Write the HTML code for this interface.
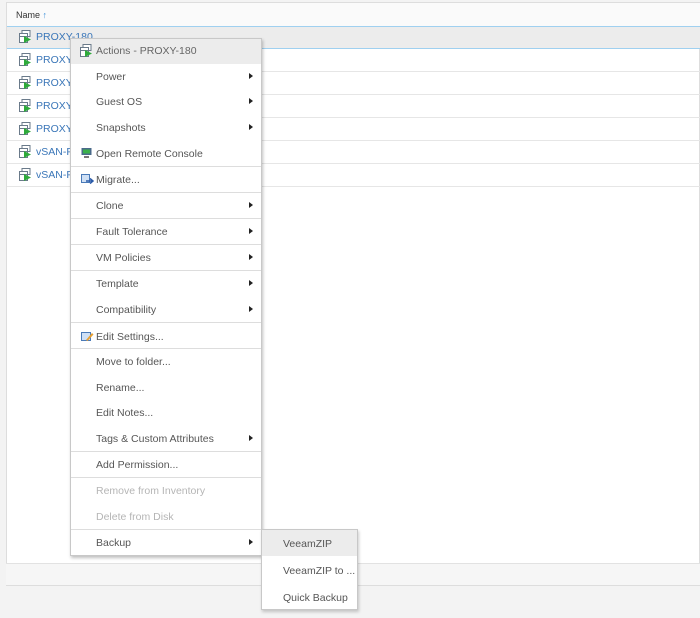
<!DOCTYPE html><html><head><style>
body{margin:0;width:700px;height:618px;background:#f3f3f3;font-family:"Liberation Sans",sans-serif;position:relative;overflow:hidden}
.a{position:absolute}
.panel{left:6px;top:2px;width:694px;height:584px;background:#fff;border:1px solid #ddd;box-sizing:border-box}
.hd{left:7px;top:3px;width:693px;height:23px;background:#fafafa;border-bottom:1px solid #e2e2e2;font-size:9px;color:#333}
.row{left:7px;width:693px;height:23px;border-bottom:1px solid #e6e6e6;box-sizing:border-box;font-size:10.5px;color:#3a76b8}
.row span{position:absolute;left:29px;top:5px}
.vm{position:absolute;left:12px;top:4px;width:13px;height:13px}
.menu{left:70px;top:38px;width:192px;height:518px;background:#fff;border:1px solid #c8c8c8;box-shadow:1px 2px 3px rgba(0,0,0,.25);box-sizing:border-box}
.it{position:absolute;left:25px;font-size:10.5px;color:#565656;line-height:12px}
.dis{color:#b5b5b5}
.ar{position:absolute;left:178px;width:0;height:0;border-left:4px solid #222;border-top:3px solid transparent;border-bottom:3px solid transparent;margin-top:-1px}
.sep{position:absolute;left:0;width:190px;height:1px;background:#ddd}
.sub{left:261px;top:529px;width:97px;height:81px;background:#fff;border:1px solid #c8c8c8;box-shadow:1px 2px 3px rgba(0,0,0,.2);box-sizing:border-box}
</style></head><body>
<div class="a panel"></div>
<div class="a hd"><span class="a" style="left:9px;top:7px">Name <span style="color:#3a8fd8">&#8593;</span></span></div>
<div class="a" style="left:7px;top:26px;width:693px;height:23px;background:#ececec;border-top:1px solid #9fd0f0;border-bottom:1px solid #9fd0f0;box-sizing:border-box"></div>
<div class="a" style="left:6px;top:563px;width:694px;height:23px;background:#f6f6f6;border-top:1px solid #e2e2e2;border-bottom:1px solid #ddd;box-sizing:border-box"></div>

<svg width="0" height="0" style="position:absolute"><defs><g id="v"><rect x="3" y="0.5" width="8" height="6" fill="#fff" stroke="#6a7a8a"/><rect x="0.5" y="3.5" width="8" height="9" fill="#fff" stroke="#6a7a8a"/><line x1="0.5" y1="6.5" x2="8.5" y2="6.5" stroke="#6a7a8a"/><path d="M5 6 L12 9.5 L5 13 Z" fill="#2eaa3a"/></g></defs></svg>

<div class="a row" style="top:26px;border:none"><svg class="vm"><use href="#v"/></svg><span>PROXY-180</span></div>
<div class="a row" style="top:49px"><svg class="vm"><use href="#v"/></svg><span>PROXY-1</span></div>
<div class="a row" style="top:72px"><svg class="vm"><use href="#v"/></svg><span>PROXY-1</span></div>
<div class="a row" style="top:95px"><svg class="vm"><use href="#v"/></svg><span>PROXY-1</span></div>
<div class="a row" style="top:118px"><svg class="vm"><use href="#v"/></svg><span>PROXY-1</span></div>
<div class="a row" style="top:141px"><svg class="vm"><use href="#v"/></svg><span>vSAN-FT</span></div>
<div class="a row" style="top:164px"><svg class="vm"><use href="#v"/></svg><span>vSAN-FT</span></div>

<div class="a menu">
<div style="position:absolute;left:0;top:0;width:190px;height:25px;background:#ececec"></div>
<svg style="position:absolute;left:9px;top:5px;width:13px;height:13px"><use href="#v"/></svg>
<div class="it" style="top:6px;color:#666">Actions - PROXY-180</div>
<div class="it" style="top:32px">Power</div><div class="ar" style="top:35px"></div>
<div class="it" style="top:57px">Guest OS</div><div class="ar" style="top:60px"></div>
<div class="it" style="top:83px">Snapshots</div><div class="ar" style="top:86px"></div>
<svg style="position:absolute;left:10px;top:108px" width="12" height="12"><rect x="0.5" y="1" width="10" height="7" fill="#4a6a8a"/><rect x="2" y="2.5" width="7" height="4" fill="#3bb04a"/><rect x="3" y="9" width="5" height="2" fill="#777"/></svg>
<div class="it" style="top:109px">Open Remote Console</div>
<div class="sep" style="top:127px"></div>
<svg style="position:absolute;left:10px;top:134px" width="13" height="12"><rect x="0.5" y="1.5" width="8" height="8" fill="#cfe0f5" stroke="#4a7ab8"/><path d="M5 8 H12 M9 5.5 L12 8 L9 10.5" stroke="#2a5aa8" fill="none" stroke-width="1.5"/></svg>
<div class="it" style="top:135px">Migrate...</div>
<div class="sep" style="top:153px"></div>
<div class="it" style="top:161px">Clone</div><div class="ar" style="top:164px"></div>
<div class="sep" style="top:179px"></div>
<div class="it" style="top:187px">Fault Tolerance</div><div class="ar" style="top:190px"></div>
<div class="sep" style="top:205px"></div>
<div class="it" style="top:213px">VM Policies</div><div class="ar" style="top:216px"></div>
<div class="sep" style="top:231px"></div>
<div class="it" style="top:239px">Template</div><div class="ar" style="top:242px"></div>
<div class="it" style="top:265px">Compatibility</div><div class="ar" style="top:268px"></div>
<div class="sep" style="top:283px"></div>
<svg style="position:absolute;left:10px;top:291px" width="13" height="12"><rect x="0.5" y="2.5" width="9" height="8" fill="#cfe0f5" stroke="#4a7ab8"/><path d="M5 10 L11 3 L12.5 4.5 L6.5 11 Z" fill="#e8a030"/></svg>
<div class="it" style="top:292px">Edit Settings...</div>
<div class="sep" style="top:309px"></div>
<div class="it" style="top:317px">Move to folder...</div>
<div class="it" style="top:343px">Rename...</div>
<div class="it" style="top:368px">Edit Notes...</div>
<div class="it" style="top:394px">Tags &amp; Custom Attributes</div><div class="ar" style="top:397px"></div>
<div class="sep" style="top:412px"></div>
<div class="it" style="top:420px">Add Permission...</div>
<div class="sep" style="top:438px"></div>
<div class="it dis" style="top:446px">Remove from Inventory</div>
<div class="it dis" style="top:472px">Delete from Disk</div>
<div class="sep" style="top:490px"></div>
<div class="it" style="top:498px">Backup</div><div class="ar" style="top:501px"></div>
</div>

<div class="a sub">
<div style="position:absolute;left:0;top:0;width:95px;height:26px;background:#ececec"></div>
<div class="it" style="left:21px;top:8px">VeeamZIP</div>
<div class="it" style="left:21px;top:35px">VeeamZIP to ...</div>
<div class="it" style="left:21px;top:62px">Quick Backup</div>
</div>
</body></html>
